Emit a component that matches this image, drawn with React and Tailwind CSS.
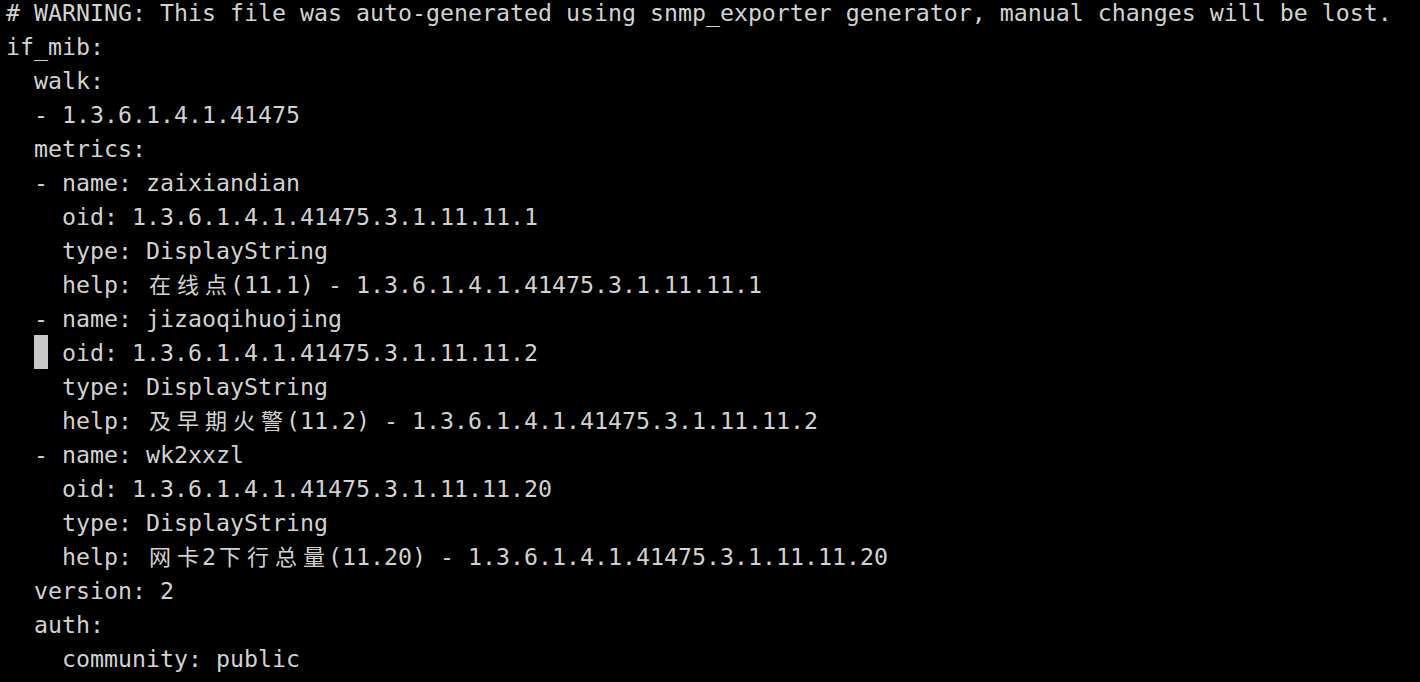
const LINES = [
  "# WARNING: This file was auto-generated using snmp_exporter generator, manual changes will be lost.",
  "if_mib:",
  "  walk:",
  "  - 1.3.6.1.4.1.41475",
  "  metrics:",
  "  - name: zaixiandian",
  "    oid: 1.3.6.1.4.1.41475.3.1.11.11.1",
  "    type: DisplayString",
  "    help: 在线点(11.1) - 1.3.6.1.4.1.41475.3.1.11.11.1",
  "  - name: jizaoqihuojing",
  "    oid: 1.3.6.1.4.1.41475.3.1.11.11.2",
  "    type: DisplayString",
  "    help: 及早期火警(11.2) - 1.3.6.1.4.1.41475.3.1.11.11.2",
  "  - name: wk2xxzl",
  "    oid: 1.3.6.1.4.1.41475.3.1.11.11.20",
  "    type: DisplayString",
  "    help: 网卡2下行总量(11.20) - 1.3.6.1.4.1.41475.3.1.11.11.20",
  "  version: 2",
  "  auth:",
  "    community: public",
];

const CURSOR = { line: 10, col: 2 };

// wide chars take two terminal cells
function Line({ text, cursorCol }) {
  const parts = [];
  let buf = "";
  [...text].forEach((ch, i) => {
    const wide = /[\u3000-\u9fff]/.test(ch);
    if (i === cursorCol) {
      if (buf) parts.push(buf);
      buf = "";
      parts.push(
        <span key={`c${i}`} className="relative -top-[5px] inline-block h-[34px] w-[14px] bg-[#c8c8c8] align-top text-black">
          {ch === " " ? "\u00a0" : ch}
        </span>
      );
      return;
    }
    if (wide) {
      if (buf) parts.push(buf);
      buf = "";
      parts.push(
        <span
          key={`w${i}`}
          className="inline-block h-[26px] w-[28px] align-top text-center font-['Noto_Sans_CJK_SC',sans-serif] text-[22px] leading-[23px]"
        >
          {ch}
        </span>
      );
    } else {
      buf += ch;
    }
  });
  if (buf) parts.push(buf);
  return <div className="h-[34px] whitespace-pre">{parts}</div>;
}

export default function App() {
  return (
    <div className="h-[682px] w-[1420px] overflow-hidden bg-black pl-[6px] font-['DejaVu_Sans_Mono',monospace] text-[23.25px] leading-[26px] text-[#d2d2d2]">
      {LINES.map((l, i) => (
        <Line key={i} text={l} cursorCol={i === CURSOR.line ? CURSOR.col : -1} />
      ))}
    </div>
  );
}
